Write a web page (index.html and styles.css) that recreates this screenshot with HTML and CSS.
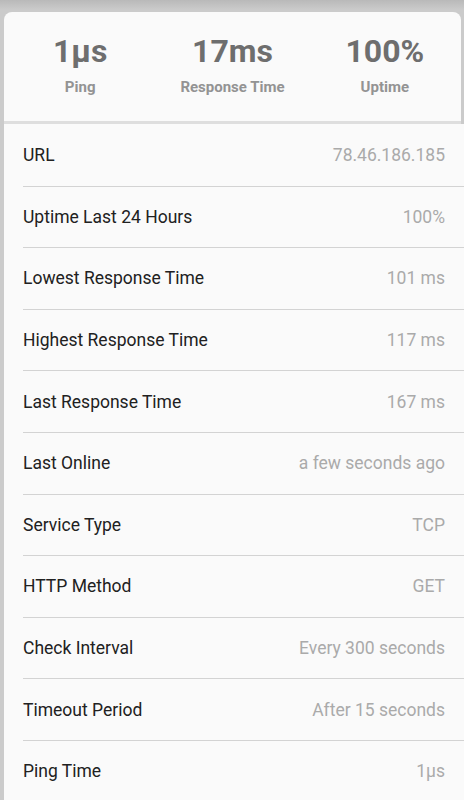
FILE: index.html
```html
<!DOCTYPE html>
<html>
<head>
<meta charset="utf-8" />
<title>Monitor details</title>
<link rel="stylesheet" href="styles.css">
</head>
<body>
<div class="screen">
	<div class="summary">
		<div class="stat">
			<div class="stat-value">1µs</div>
			<div class="stat-label">Ping</div>
		</div>
		<div class="stat">
			<div class="stat-value">17ms</div>
			<div class="stat-label">Response Time</div>
		</div>
		<div class="stat">
			<div class="stat-value">100%</div>
			<div class="stat-label">Uptime</div>
		</div>
	</div>
	<div class="details">
		<div class="row"><span class="label">URL</span><span class="value">78.46.186.185</span></div>
		<div class="row"><span class="label">Uptime Last 24 Hours</span><span class="value">100%</span></div>
		<div class="row"><span class="label">Lowest Response Time</span><span class="value">101 ms</span></div>
		<div class="row"><span class="label">Highest Response Time</span><span class="value">117 ms</span></div>
		<div class="row"><span class="label">Last Response Time</span><span class="value">167 ms</span></div>
		<div class="row"><span class="label">Last Online</span><span class="value">a few seconds ago</span></div>
		<div class="row"><span class="label">Service Type</span><span class="value">TCP</span></div>
		<div class="row"><span class="label">HTTP Method</span><span class="value">GET</span></div>
		<div class="row"><span class="label">Check Interval</span><span class="value">Every 300 seconds</span></div>
		<div class="row"><span class="label">Timeout Period</span><span class="value">After 15 seconds</span></div>
		<div class="row"><span class="label">Ping Time</span><span class="value">1µs</span></div>
	</div>
</div>
</body>
</html>
```

FILE: styles.css
```css
html, body { margin: 0; height: 100%; overflow: hidden; }
body {
	background: linear-gradient(#b9b9b9, #cbcbcb 10px, #cbcbcb);
	font-family: Roboto, "Liberation Sans", sans-serif;
}
.screen { padding: 12px 3px 0 4px; }

.summary {
	display: grid;
	grid-template-columns: 1fr 1fr 1fr;
	background: #fafafa;
	border-radius: 8px 8px 0 0;
	padding: 20px 0 25px;
	border-bottom: 3px solid #dedede;
}
	.stat { text-align: center; }
	.stat-value { font-size: 32px; line-height: 38px; font-weight: 700; color: #6e6e6e; }
	.stat-label { font-size: 15px; line-height: 18px; font-weight: 700; color: #939393; margin-top: 8px; }

.details { background: #fafafa; margin-right: -3px; padding-top: 1px; }
	.row {
		display: flex;
		justify-content: space-between;
		align-items: center;
		height: 60.6px;
		margin-left: 19px;
		padding-right: 19px;
		border-bottom: 1px solid #d3d3d3;
		font-size: 17.5px;
	}
		.row .label { color: #212121; }
		.row .value { color: #aaaaaa; }
```
